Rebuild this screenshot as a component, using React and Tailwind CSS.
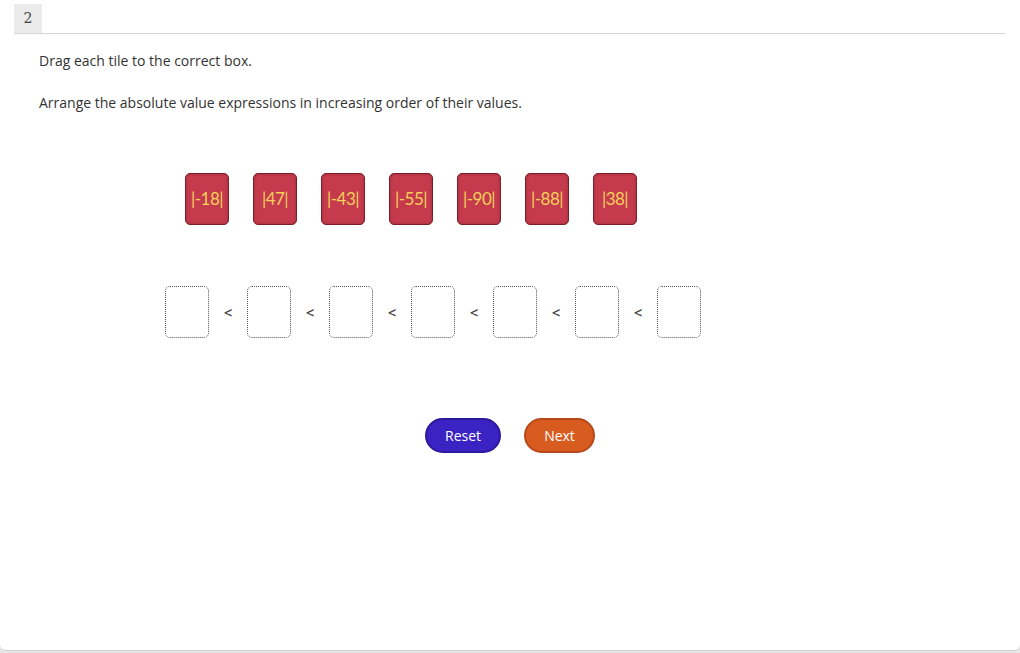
import React from "react";

const tiles = ["|-18|", "|47|", "|-43|", "|-55|", "|-90|", "|-88|", "|38|"];

export default function App() {
  return (
    <div className="w-[1020px] h-[653px] bg-[#e6e6e6] overflow-hidden" style={{ fontFamily: '"Open Sans", sans-serif' }}>
      <div className="h-[651px] bg-white rounded-b-[6px] border-b border-[#cfcfcf] flex flex-col">
        <div className="pt-[4px] ml-[14px] mr-[15px] border-b border-[#d6d6d6] flex">
          <div className="w-[28px] h-[29px] bg-[#ebebeb] flex items-center justify-center text-[14px] text-[#444]" style={{ fontFamily: '"DejaVu Serif", serif' }}>2</div>
        </div>
        <div className="pl-[39px] pt-[17px] text-[14px] text-[#333] leading-[20px]">Drag each tile to the correct box.</div>
        <div className="pl-[39px] pt-[22px] text-[14px] text-[#333] leading-[20px]">Arrange the absolute value expressions in increasing order of their values.</div>
        <div className="flex gap-[24px] pl-[185px] pt-[60px]">
          {tiles.map((t) => (
            <div
              key={t}
              className="w-[44px] h-[52px] rounded-[5px] bg-[#c53b4d] border border-[#7d1e28] flex items-center justify-center text-[#f7cf5a] text-[17px] tracking-[-0.5px] shadow-[inset_0_0_3px_rgba(0,0,0,0.25)]"
              style={{ fontFamily: 'Lato, "Open Sans", sans-serif' }}
            >
              {t}
            </div>
          ))}
        </div>
        <div className="flex items-center pl-[165px] pt-[61px]">
          {tiles.map((t, i) => (
            <React.Fragment key={i}>
              {i > 0 && (
                <div className="w-[38px] flex items-center justify-center text-[15px] font-semibold text-[#444] leading-none">&lt;</div>
              )}
              <div className="w-[44px] h-[52px] rounded-[5px] border border-dotted border-[#555]" />
            </React.Fragment>
          ))}
        </div>
        <div className="flex gap-[23px] pl-[425px] pt-[80px]">
          <button className="w-[76px] h-[35px] rounded-full bg-[#3b22c2] border-2 border-[#2b1a9c] text-white text-[14px]">Reset</button>
          <button className="w-[71px] h-[35px] rounded-full bg-[#d85c1f] border-2 border-[#b8481a] text-white text-[14px]">Next</button>
        </div>
      </div>
    </div>
  );
}
